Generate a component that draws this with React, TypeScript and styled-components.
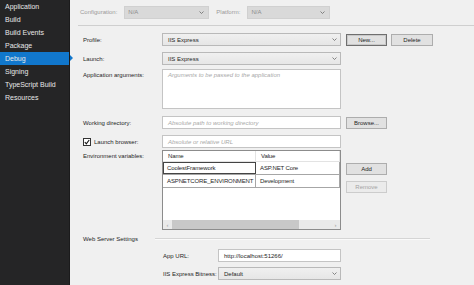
import React from "react";
import styled, { createGlobalStyle } from "styled-components";

const Global = createGlobalStyle`
  html, body { margin: 0; padding: 0; background: #f0f0f0; }
  #root { width: 474px; height: 285px; overflow: hidden; }
  * { box-sizing: border-box; }
`;

const Shell = styled.div`
  display: flex;
  width: 474px;
  height: 285px;
  font-family: "Liberation Sans", Arial, sans-serif;
  font-size: 6px;
  color: #1e1e1e;
`;

const Sidebar = styled.nav`
  width: 70px;
  flex: none;
  background: #252526;
  border-right: 1px solid #1b1b1c;
  display: flex;
  flex-direction: column;
`;

const NavItem = styled.div<{ $active?: boolean }>`
  position: relative;
  height: 13px;
  line-height: 13px;
  padding-left: 5px;
  font-size: 7px;
  color: #e8e8e8;
  background: ${(p) => (p.$active ? "#1177cc" : "transparent")};
  &::after {
    content: "";
    display: ${(p) => (p.$active ? "block" : "none")};
    position: absolute;
    right: -4px;
    top: 3px;
    border-left: 3px solid #1177cc;
    border-top: 3px solid transparent;
    border-bottom: 3px solid transparent;
  }
`;

const Main = styled.main`
  flex: 1;
  display: flex;
  flex-direction: column;
`;

const TopBar = styled.div`
  height: 26px;
  margin-left: 8px;
  padding-left: 2px;
  border-bottom: 1px solid #cfcfcf;
  display: flex;
  align-items: center;
  gap: 7px;
  padding-bottom: 1px;
`;

const DimLabel = styled.span`
  color: #9a9a9a;
`;

const DisabledCombo = styled.div<{ $w: number }>`
  width: ${(p) => p.$w}px;
  height: 13px;
  background: #d9d9d9;
  border: 1px solid #d0d0d0;
  color: #8c8c8c;
  display: flex;
  align-items: center;
  justify-content: space-between;
  padding: 0 4px 0 3px;
`;

const Form = styled.div`
  display: flex;
  flex-direction: column;
  padding-left: 13px;
  padding-top: 7px;
`;

const Row = styled.div<{ $mt: number; $h?: number; $indent?: number }>`
  display: flex;
  align-items: ${(p) => (p.$h && p.$h > 13 ? "flex-start" : "center")};
  margin-top: ${(p) => p.$mt}px;
  height: ${(p) => p.$h ?? 13}px;
  padding-left: ${(p) => p.$indent ?? 0}px;
`;

const Label = styled.div<{ $w?: number; $top?: boolean }>`
  width: ${(p) => p.$w ?? 79}px;
  flex: none;
  padding-top: ${(p) => (p.$top ? 3 : 0)}px;
  white-space: nowrap;
  display: flex;
  align-items: center;
  gap: 3px;
`;

const Combo = styled.div<{ $w?: number }>`
  width: ${(p) => p.$w ?? 179}px;
  height: 13px;
  flex: none;
  background: linear-gradient(#f0f0f0, #e6e6e6);
  border: 1px solid #b9b9b9;
  display: flex;
  align-items: center;
  justify-content: space-between;
  padding: 0 3px 0 5px;
`;

const TextBox = styled.div<{ $w?: number; $h?: number; $placeholder?: boolean }>`
  width: ${(p) => p.$w ?? 179}px;
  height: ${(p) => p.$h ?? 13}px;
  flex: none;
  background: #fff;
  border: 1px solid #c4c4c4;
  padding: ${(p) => (p.$h && p.$h > 13 ? "2px 5px" : "0 5px")};
  display: flex;
  align-items: ${(p) => (p.$h && p.$h > 13 ? "flex-start" : "center")};
  color: ${(p) => (p.$placeholder ? "#a8a8a8" : "#1e1e1e")};
  font-style: ${(p) => (p.$placeholder ? "italic" : "normal")};
  white-space: nowrap;
  overflow: hidden;
`;

const Buttons = styled.div<{ $column?: boolean }>`
  display: flex;
  flex-direction: ${(p) => (p.$column ? "column" : "row")};
  gap: ${(p) => (p.$column ? 6 : 4)}px;
  margin-left: 5px;
  padding-top: ${(p) => (p.$column ? 13 : 0)}px;
`;

const Button = styled.div<{ $w?: number; $default?: boolean; $disabled?: boolean }>`
  width: ${(p) => p.$w ?? 41}px;
  height: 12px;
  background: ${(p) => (p.$disabled ? "#ebebeb" : "#e1e1e1")};
  border: 1px solid
    ${(p) => (p.$default ? "#6f6f6f" : p.$disabled ? "#cccccc" : "#adadad")};
  box-shadow: ${(p) => (p.$default ? "inset 0 0 0 1px #c9c9c9" : "none")};
  color: ${(p) => (p.$disabled ? "#a3a3a3" : "#1e1e1e")};
  display: flex;
  align-items: center;
  justify-content: center;
`;

const Check = styled.div`
  width: 8px;
  height: 8px;
  background: #fff;
  border: 1px solid #333;
  display: flex;
  align-items: center;
  justify-content: center;
`;

const Grid = styled.div`
  width: 179px;
  height: 80px;
  flex: none;
  background: #fff;
  border: 1px solid #8c8c8c;
  display: flex;
  flex-direction: column;
  overflow: hidden;
`;

const GridRow = styled.div<{ $header?: boolean }>`
  display: grid;
  grid-template-columns: 93px 1fr;
  height: ${(p) => (p.$header ? 11 : 13)}px;
  border-bottom: 1px solid ${(p) => (p.$header ? "#e3e3e3" : "#a6a6a6")};
`;

const Cell = styled.div<{ $current?: boolean; $header?: boolean }>`
  padding-left: ${(p) => (p.$header ? 5 : 4)}px;
  display: flex;
  align-items: center;
  white-space: nowrap;
  overflow: hidden;
  letter-spacing: -0.12px;
  border-right: 1px solid ${(p) => (p.$header ? "#e3e3e3" : "#a6a6a6")};
  outline: ${(p) => (p.$current ? "1px solid #444" : "none")};
  outline-offset: -1px;
`;

const Spacer = styled.div`
  flex: 1;
`;

const HScroll = styled.div`
  height: 9px;
  display: flex;
  background: #eaeaea;
  align-items: stretch;
`;

const ScrollArrow = styled.div`
  width: 9px;
  display: flex;
  align-items: center;
  justify-content: center;
  color: #9a9a9a;
  font-size: 6px;
`;

const Thumb = styled.div`
  width: 127px;
  background: #c8c8c8;
`;

const SectionRow = styled.div`
  display: flex;
  align-items: center;
  margin-top: 3px;
  height: 12px;
`;

const SectionRule = styled.div`
  width: 275px;
  height: 2px;
  border-top: 1px solid #d5d5d5;
  border-bottom: 1px solid #fafafa;
`;

const SectionLabel = styled.div`
  width: 72px;
  flex: none;
`;

const Chevron = () => (
  <svg width="5" height="3" viewBox="0 0 5 3">
    <polyline points="0.5,0.5 2.5,2.5 4.5,0.5" fill="none" stroke="#6a6a6a" strokeWidth="0.8" />
  </svg>
);

const CheckMark = () => (
  <svg width="6" height="6" viewBox="0 0 6 6">
    <polyline points="0.8,3 2.3,4.8 5.2,1" fill="none" stroke="#111" strokeWidth="1.1" />
  </svg>
);

const navItems = [
  "Application",
  "Build",
  "Build Events",
  "Package",
  "Debug",
  "Signing",
  "TypeScript Build",
  "Resources",
];

export default function App() {
  return (
    <>
      <Global />
      <Shell>
        <Sidebar>
          {navItems.map((n) => (
            <NavItem key={n} $active={n === "Debug"}>
              {n}
            </NavItem>
          ))}
        </Sidebar>
        <Main>
          <TopBar>
            <DimLabel>Configuration:</DimLabel>
            <DisabledCombo $w={85}>
              N/A
              <Chevron />
            </DisabledCombo>
            <DimLabel>Platform:</DimLabel>
            <DisabledCombo $w={83}>
              N/A
              <Chevron />
            </DisabledCombo>
          </TopBar>
          <Form>
            <Row $mt={0}>
              <Label>Profile:</Label>
              <Combo>
                IIS Express
                <Chevron />
              </Combo>
              <Buttons>
                <Button $default>New...</Button>
                <Button $w={42}>Delete</Button>
              </Buttons>
            </Row>
            <Row $mt={6}>
              <Label>Launch:</Label>
              <Combo>
                IIS Express
                <Chevron />
              </Combo>
            </Row>
            <Row $mt={4} $h={40}>
              <Label $top>Application arguments:</Label>
              <TextBox $h={40} $placeholder>
                Arguments to be passed to the application
              </TextBox>
            </Row>
            <Row $mt={7}>
              <Label>Working directory:</Label>
              <TextBox $placeholder>Absolute path to working directory</TextBox>
              <Buttons>
                <Button>Browse...</Button>
              </Buttons>
            </Row>
            <Row $mt={6}>
              <Label>
                <Check>
                  <CheckMark />
                </Check>
                Launch browser:
              </Label>
              <TextBox $placeholder>Absolute or relative URL</TextBox>
            </Row>
            <Row $mt={2} $h={80}>
              <Label $top>Environment variables:</Label>
              <Grid>
                <GridRow $header>
                  <Cell $header>Name</Cell>
                  <Cell $header>Value</Cell>
                </GridRow>
                <GridRow>
                  <Cell $current>CoolestFramework</Cell>
                  <Cell>ASP.NET Core</Cell>
                </GridRow>
                <GridRow>
                  <Cell>ASPNETCORE_ENVIRONMENT</Cell>
                  <Cell>Development</Cell>
                </GridRow>
                <Spacer />
                <HScroll>
                  <ScrollArrow>‹</ScrollArrow>
                  <Thumb />
                  <Spacer />
                  <ScrollArrow>›</ScrollArrow>
                </HScroll>
              </Grid>
              <Buttons $column>
                <Button>Add</Button>
                <Button $disabled>Remove</Button>
              </Buttons>
            </Row>
            <SectionRow>
              <SectionLabel>Web Server Settings</SectionLabel>
              <SectionRule />
            </SectionRow>
            <Row $mt={4} $indent={80}>
              <Label $w={55}>App URL:</Label>
              <TextBox $w={123}>http://localhost:51266/</TextBox>
            </Row>
            <Row $mt={5} $indent={80}>
              <Label $w={55}>IIS Express Bitness:</Label>
              <Combo $w={123}>
                Default
                <Chevron />
              </Combo>
            </Row>
          </Form>
        </Main>
      </Shell>
    </>
  );
}
